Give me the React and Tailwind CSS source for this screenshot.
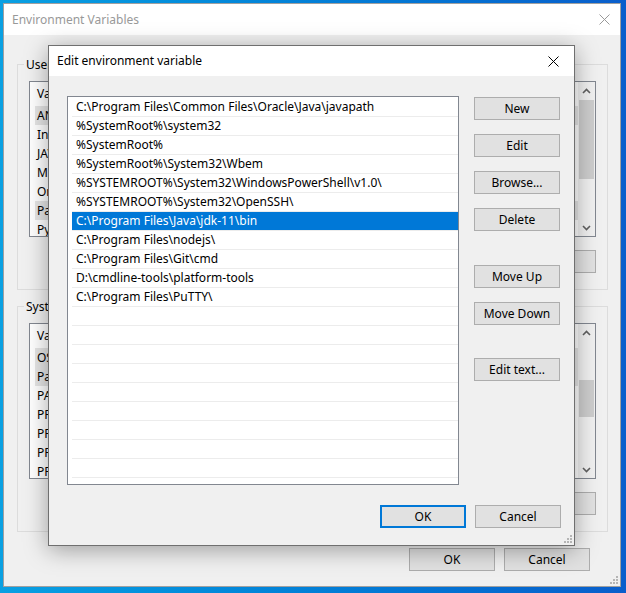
import React from "react";

const paths = [
  "C:\\Program Files\\Common Files\\Oracle\\Java\\javapath",
  "%SystemRoot%\\system32",
  "%SystemRoot%",
  "%SystemRoot%\\System32\\Wbem",
  "%SYSTEMROOT%\\System32\\WindowsPowerShell\\v1.0\\",
  "%SYSTEMROOT%\\System32\\OpenSSH\\",
  "C:\\Program Files\\Java\\jdk-11\\bin",
  "C:\\Program Files\\nodejs\\",
  "C:\\Program Files\\Git\\cmd",
  "D:\\cmdline-tools\\platform-tools",
  "C:\\Program Files\\PuTTY\\",
];

const userVars = ["ANDROID_HOME", "IntelliJ IDEA", "JAVA_HOME", "M2_HOME", "OneDrive", "Path", "PyCharm"];
const systemVars = ["OS", "Path", "PATHEXT", "PROCESSOR_ARCHITECTURE", "PROCESSOR_IDENTIFIER", "PROCESSOR_LEVEL", "PROCESSOR_REVISION"];

// Close glyph of the title bars
function CloseIcon({ color }) {
  return (
    <svg width="11" height="11" viewBox="0 0 11 11">
      <path d="M0.5 0.5 L10.5 10.5 M10.5 0.5 L0.5 10.5" stroke={color} strokeWidth="1" />
    </svg>
  );
}

// Dotted resize grip in the bottom right corner
function Grip() {
  return (
    <svg width="8" height="8" viewBox="0 0 8 8">
      <rect x="6" y="0" width="2" height="2" fill="#b5b5b5" />
      <rect x="3" y="3" width="2" height="2" fill="#b5b5b5" />
      <rect x="6" y="3" width="2" height="2" fill="#b5b5b5" />
      <rect x="0" y="6" width="2" height="2" fill="#b5b5b5" />
      <rect x="3" y="6" width="2" height="2" fill="#b5b5b5" />
      <rect x="6" y="6" width="2" height="2" fill="#b5b5b5" />
    </svg>
  );
}

function Chevron({ up }) {
  return (
    <svg width="9" height="6" viewBox="0 0 9 6">
      <path d={up ? "M1 5 L4.5 1.5 L8 5" : "M1 1 L4.5 4.5 L8 1"} stroke="#606060" strokeWidth="1.6" fill="none" />
    </svg>
  );
}

function WinButton({ label, isDefault, className = "" }) {
  return (
    <button
      className={
        "flex h-[23px] w-[86px] items-center justify-center bg-[#e1e1e1] text-black " +
        (isDefault ? "border-2 border-[#0078d7] " : "border border-[#adadad] ") +
        className
      }
    >
      {label}
    </button>
  );
}

// List view of the background window (mostly hidden by the dialog)
function VarList({ items, thumbTop, thumbHeight }) {
  return (
    <div className="ml-[11px] flex h-[156px] w-[567px] border border-[#828790] bg-white">
      <div className="flex-1 overflow-hidden">
        <div className="flex h-[24px] items-center pl-[7px]">
          <span className="w-[160px]">Variable</span>
          <span>Value</span>
        </div>
        {items.map((name, i) => (
          <div key={name} className={"ml-[5px] flex h-[19px] items-center pl-[2px] " + (i === 0 || name === "Path" ? "bg-[#e5e5e5]" : "")}>
            {name}
          </div>
        ))}
      </div>
      <div className="flex w-[17px] flex-col items-center bg-[#f0f0f0]">
        <div className="flex h-[17px] items-center justify-center">
          <Chevron up />
        </div>
        <div className="relative w-full flex-1">
          <div className="absolute left-[1px] right-[1px] bg-[#cdcdcd]" style={{ top: thumbTop, height: thumbHeight }} />
        </div>
        <div className="flex h-[17px] items-center justify-center">
          <Chevron />
        </div>
      </div>
    </div>
  );
}

function GroupBox({ title, children, className = "" }) {
  return (
    <div className={"relative h-[226px] w-[591px] border border-[#dcdcdc] " + className}>
      <span className="absolute left-[6px] top-[-8px] bg-[#f0f0f0] px-[2px] leading-[16px]">{title}</span>
      {children}
    </div>
  );
}

export default function App() {
  const rows = [...paths, ...Array(9).fill("")];

  return (
    <div className="relative h-[593px] w-[626px] overflow-hidden bg-gradient-to-r from-[#0aa0e2] to-[#0a5ecb] pl-[3px] pt-[3px] font-['Noto_Sans',sans-serif] text-[12px] text-black">
      {/* Environment Variables window (inactive) */}
      <div className="relative flex h-[584px] w-[618px] flex-col border border-[#a0a0a0] bg-[#f0f0f0]">
        <div className="flex h-[31px] shrink-0 items-center justify-between bg-white pl-[8px] pr-[10px]">
          <span className="text-[12px] text-[#999999]">Environment Variables</span>
          <CloseIcon color="#999999" />
        </div>
        <div className="pl-[13px]">
          <GroupBox title="User variables for user" className="mt-[29px]">
            <div className="pt-[16px]">
              <VarList items={userVars} thumbTop={1} thumbHeight={79} />
            </div>
            <div className="mt-[13px] flex justify-end gap-[9px] pr-[11px]">
              <WinButton label="New..." />
              <WinButton label="Edit..." />
              <WinButton label="Delete" />
            </div>
          </GroupBox>
          <GroupBox title="System variables" className="mt-[16px] h-[225px]">
            <div className="pt-[16px]">
              <VarList items={systemVars} thumbTop={39} thumbHeight={37} />
            </div>
            <div className="mt-[13px] flex justify-end gap-[9px] pr-[11px]">
              <WinButton label="New..." />
              <WinButton label="Edit..." />
              <WinButton label="Delete" />
            </div>
          </GroupBox>
          <div className="mt-[16px] flex w-[591px] justify-end gap-[9px] pr-[18px]">
            <WinButton label="OK" />
            <WinButton label="Cancel" />
          </div>
        </div>
        <div className="absolute bottom-[2px] right-[2px]">
          <Grip />
        </div>
      </div>

      {/* Edit environment variable dialog */}
      <div className="absolute left-[48px] top-[45px] flex h-[501px] w-[527px] flex-col border border-[#6f6f6f] bg-[#f0f0f0] shadow-[0_4px_22px_rgba(0,0,0,0.35)]">
        <div className="flex h-[30px] shrink-0 items-center justify-between bg-white pl-[8px] pr-[15px]">
          <span>Edit environment variable</span>
          <CloseIcon color="#000000" />
        </div>
        <div className="flex pl-[18px] pt-[20px]">
          <div className="h-[389px] w-[392px] overflow-hidden border border-[#828790] bg-white pl-[4px] pt-[1px]">
            {rows.map((p, i) => (
              <div
                key={i}
                className={
                  "flex h-[19px] items-center border-b border-[#ececec] pl-[4px] " +
                  (i === 6 ? "bg-[#0078d7] text-white" : "")
                }
              >
                {p}
              </div>
            ))}
          </div>
          <div className="ml-[15px] mt-[1px] flex flex-col">
            <WinButton label="New" />
            <WinButton label="Edit" className="mt-[14px]" />
            <WinButton label="Browse..." className="mt-[14px]" />
            <WinButton label="Delete" className="mt-[14px]" />
            <WinButton label="Move Up" className="mt-[34px]" />
            <WinButton label="Move Down" className="mt-[14px]" />
            <WinButton label="Edit text..." className="mt-[33px]" />
          </div>
        </div>
        <div className="mt-[20px] flex justify-end gap-[9px] pr-[13px]">
          <WinButton label="OK" isDefault />
          <WinButton label="Cancel" />
        </div>
        <div className="absolute bottom-[2px] right-[2px]">
          <Grip />
        </div>
      </div>
    </div>
  );
}
